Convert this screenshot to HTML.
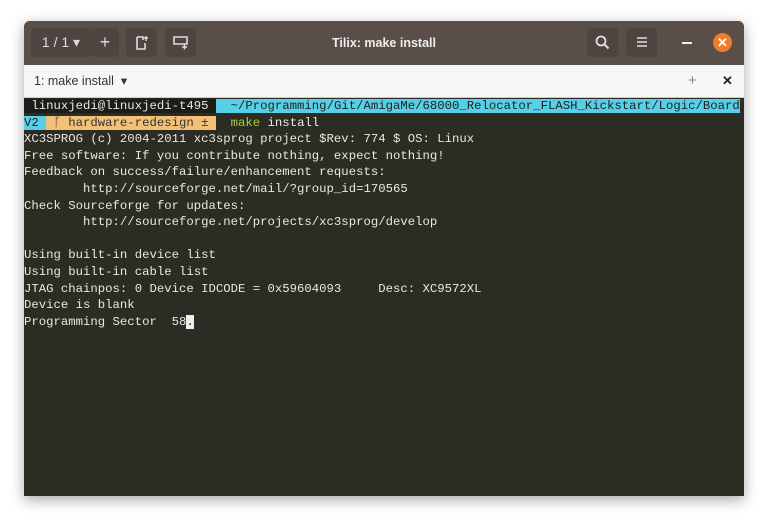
<!DOCTYPE html>
<html><head><style>
body{margin:0;width:768px;height:523px;background:#fff;overflow:hidden;position:relative;font-family:"Liberation Sans",sans-serif}
.win{position:absolute;left:24px;top:21px;width:720px;height:475px;background:#2c2c25;box-shadow:0 4px 14px rgba(0,0,0,.35);border-radius:6px 6px 0 0;overflow:hidden}
.tb{position:absolute;left:0;top:0;width:720px;height:44px;background:#5a4f48}
.btn{position:absolute;top:7px;height:29px;background:#4f4540;border-radius:4px;color:#ddd;font-size:14px;line-height:29px;text-align:center}
.tabs{position:absolute;top:44px;left:0;width:720px;height:32px;background:#f6f6f6;border-bottom:1px solid #ccc}
.term{position:absolute;top:77px;left:0;width:720px;font-family:"Liberation Mono",monospace;font-size:12.3px;line-height:16.6px;color:#e8e8e0}
.term div{height:16.6px;white-space:pre}
span.a{background:#1c1c18}
span.c{background:#55d0e8;color:#222}
span.y{background:#f2c078;color:#333}
.g{color:#9fd33a}
</style></head><body>
<div class="win">
 <div class="tb">
  <div class="btn" style="left:7px;width:60px">1 / 1 ▾</div>
  <div class="btn" style="left:67px;width:28px;font-size:18px">+</div>
  <div class="btn" style="left:102px;width:31px">
   <svg width="14" height="16" viewBox="0 0 14 16" style="margin-top:7px"><path d="M2 2h6v3M2 2v12h8V8" fill="none" stroke="#ddd" stroke-width="1.6"/><path d="M11 1v5M9 3h4" stroke="#ddd" stroke-width="1.4"/></svg></div>
  <div class="btn" style="left:141px;width:31px">
   <svg width="16" height="14" viewBox="0 0 16 14" style="margin-top:8px"><path d="M1 1h13v7H1z" fill="none" stroke="#ddd" stroke-width="1.6"/><path d="M9 11h5M11.5 8.5v5" stroke="#ddd" stroke-width="1.4"/></svg></div>
  <div style="position:absolute;left:0;width:720px;top:0;line-height:44px;text-align:center;color:#eee;font-weight:bold;font-size:12.5px">Tilix: make install</div>
  <div class="btn" style="left:563px;width:31px"><svg width="15" height="15" viewBox="0 0 15 15" style="margin-top:7px"><circle cx="6" cy="6" r="4.5" fill="none" stroke="#ddd" stroke-width="1.8"/><path d="M9.5 9.5l4 4" stroke="#ddd" stroke-width="2"/></svg></div>
  <div class="btn" style="left:602px;width:31px"><svg width="12" height="12" viewBox="0 0 12 12" style="margin-top:8px"><path d="M1 2h10M1 6h10M1 10h10" stroke="#ddd" stroke-width="1.6"/></svg></div>
  <div style="position:absolute;left:658px;top:21px;width:10px;height:2px;background:#eee"></div>
  <div style="position:absolute;left:689px;top:12px;width:19px;height:19px;border-radius:50%;background:#ee7d2e;color:#fff;font-size:13px;line-height:19px;text-align:center;font-weight:bold">✕</div>
 </div>
 <div class="tabs">
  <div style="position:absolute;left:10px;line-height:32px;font-size:12.5px;color:#333">1: make install &nbsp;▾</div>
  <div style="position:absolute;left:664px;line-height:32px;font-size:15px;color:#888">+</div>
  <div style="position:absolute;left:698px;line-height:32px;font-size:13px;color:#222;font-weight:bold">✕</div>
 </div>
 <div class="term"><div><span class="a"> linuxjedi@linuxjedi-t495 </span><span class="c">  ~/Programming/Git/AmigaMe/68000_Relocator_FLASH_Kickstart/Logic/Board</span></div><div><span class="c">V2 </span><span class="y"> ᚴ hardware-redesign ± </span>  <span class="g">make</span> install</div><div>XC3SPROG (c) 2004-2011 xc3sprog project $Rev: 774 $ OS: Linux</div><div>Free software: If you contribute nothing, expect nothing!</div><div>Feedback on success/failure/enhancement requests:</div><div>        http://sourceforge.net/mail/?group_id=170565</div><div>Check Sourceforge for updates:</div><div>        http://sourceforge.net/projects/xc3sprog/develop</div><div></div><div>Using built-in device list</div><div>Using built-in cable list</div><div>JTAG chainpos: 0 Device IDCODE = 0x59604093     Desc: XC9572XL</div><div>Device is blank</div><div>Programming Sector  58<span style="background:#eee;color:#222">.</span></div></div>
</div>
</body></html>
